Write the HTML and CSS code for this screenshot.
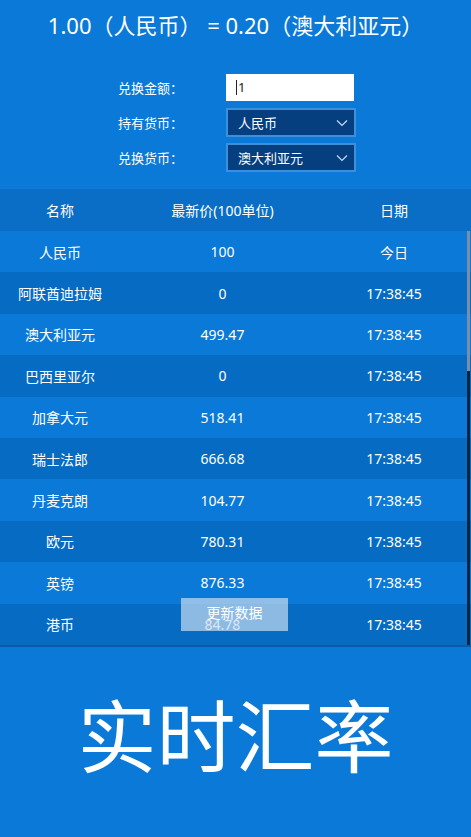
FILE: index.html
```html
<!DOCTYPE html>
<html lang="zh-CN">
<head>
  <meta charset="UTF-8" />
  <meta name="viewport" content="width=device-width, initial-scale=1.0"/>
  <title>实时汇率</title>
  <link rel="stylesheet" href="styles.css">
</head>
<body>

<div class="app">
  <h1 class="result">1.00（人民币） = 0.20（澳大利亚元）</h1>

  <div class="form">
    <div class="field">
      <span class="label">兑换金额：</span>
      <div class="input"><span class="caret"></span>1</div>
    </div>
    <div class="field">
      <span class="label">持有货币：</span>
      <div class="select">人民币
        <svg class="chev" width="12" height="8" viewBox="0 0 12 8"><polyline points="1,1.5 6,6.5 11,1.5" fill="none" stroke="#c9dcf0" stroke-width="1.2"/></svg>
      </div>
    </div>
    <div class="field">
      <span class="label">兑换货币：</span>
      <div class="select">澳大利亚元
        <svg class="chev" width="12" height="8" viewBox="0 0 12 8"><polyline points="1,1.5 6,6.5 11,1.5" fill="none" stroke="#c9dcf0" stroke-width="1.2"/></svg>
      </div>
    </div>
  </div>

  <div class="table">
    <div class="row head">
      <span>名称</span><span>最新价(100单位)</span><span>日期</span>
    </div>
    <div class="body">
      <div class="rows" id="rows"></div>
      <div class="scrollbar"><div class="thumb"></div></div>
      <button class="refresh">更新数据</button>
    </div>
  </div>

  <div class="brand">实时汇率</div>
</div>

<script>
  const rates = [
    ['人民币', '100', '今日'],
    ['阿联酋迪拉姆', '0', '17:38:45'],
    ['澳大利亚元', '499.47', '17:38:45'],
    ['巴西里亚尔', '0', '17:38:45'],
    ['加拿大元', '518.41', '17:38:45'],
    ['瑞士法郎', '666.68', '17:38:45'],
    ['丹麦克朗', '104.77', '17:38:45'],
    ['欧元', '780.31', '17:38:45'],
    ['英镑', '876.33', '17:38:45'],
    ['港币', '84.78', '17:38:45']
  ];

  const rows = document.getElementById('rows');
  rates.forEach((r, i) => {
    const row = document.createElement('div');
    row.className = 'row' + (i % 2 ? ' alt' : '');
    for (let text of r) {
      const cell = document.createElement('span');
      cell.textContent = text;
      row.appendChild(cell);
    }
    rows.appendChild(row);
  });
</script>

</body>
</html>
```

FILE: styles.css
```css
  body {
    margin: 0;
    background-color: #0a79d8;
    font-family: "Noto Sans", "Noto Sans CJK SC", sans-serif;
    color: #fff;
  }
  .app {
    width: 471px;
    height: 837px;
    overflow: hidden;
  }
  .result {
    margin: 0;
    padding-top: 10px;
    height: 50px;
    font-size: 22px;
    font-weight: normal;
    text-align: center;
    line-height: 30px;
  }
  .form {
    display: flex;
    flex-direction: column;
    gap: 8px;
    padding-left: 118px;
    margin-top: 14px;
  }
  .field {
    display: flex;
    align-items: center;
    height: 27px;
  }
  .label {
    width: 108px;
    font-size: 13px;
  }
  .input {
    width: 116px;
    height: 23px;
    background: #fff;
    border: 2px solid #fff;
    color: #222;
    font-size: 13px;
    line-height: 23px;
    display: flex;
    align-items: center;
    padding-left: 8px;
    box-sizing: content-box;
  }
  .caret {
    width: 1px;
    height: 15px;
    background: #222;
    margin-right: 1px;
  }
  .select {
    width: 116px;
    height: 25px;
    box-sizing: content-box;
    background: #053f80;
    border: 2px solid #3d8fdb;
    font-size: 13px;
    display: flex;
    align-items: center;
    justify-content: space-between;
    padding-left: 10px;
  }
  .chev {
    margin-right: 6px;
  }
  .table {
    margin-top: 18px;
  }
  .row {
    display: grid;
    grid-template-columns: 120px 205px 138px;
    align-items: center;
    height: 41.4px;
    font-size: 14px;
  }
  .row span {
    text-align: center;
  }
  .head {
    height: 42px;
    background: #0a6dc6;
  }
  .body {
    position: relative;
    height: 414px;
    border-left: 3px solid #0a5aa8;
    border-bottom: 2px solid #0a5aa8;
    margin-left: -3px;
  }
  .rows .row {
    background: #0a79d8;
  }
  .rows .alt {
    background: #066bc2;
  }
  .scrollbar {
    position: absolute;
    top: 0;
    right: 1px;
    width: 3px;
    height: 414px;
    background: #0c2440;
  }
  .thumb {
    height: 140px;
    background: #7a8fa6;
  }
  .refresh {
    position: absolute;
    left: 181px;
    top: 367px;
    width: 107px;
    height: 33px;
    border: none;
    background: rgba(200, 220, 240, 0.7);
    color: #fff;
    font-family: "Noto Sans CJK SC", sans-serif;
    font-size: 14px;
    padding: 0 0 6px;
  }
  .brand {
    text-align: center;
    font-size: 79px;
    line-height: 1;
    margin-top: 46px;
    font-family: "Noto Sans CJK SC", sans-serif;
  }
```
